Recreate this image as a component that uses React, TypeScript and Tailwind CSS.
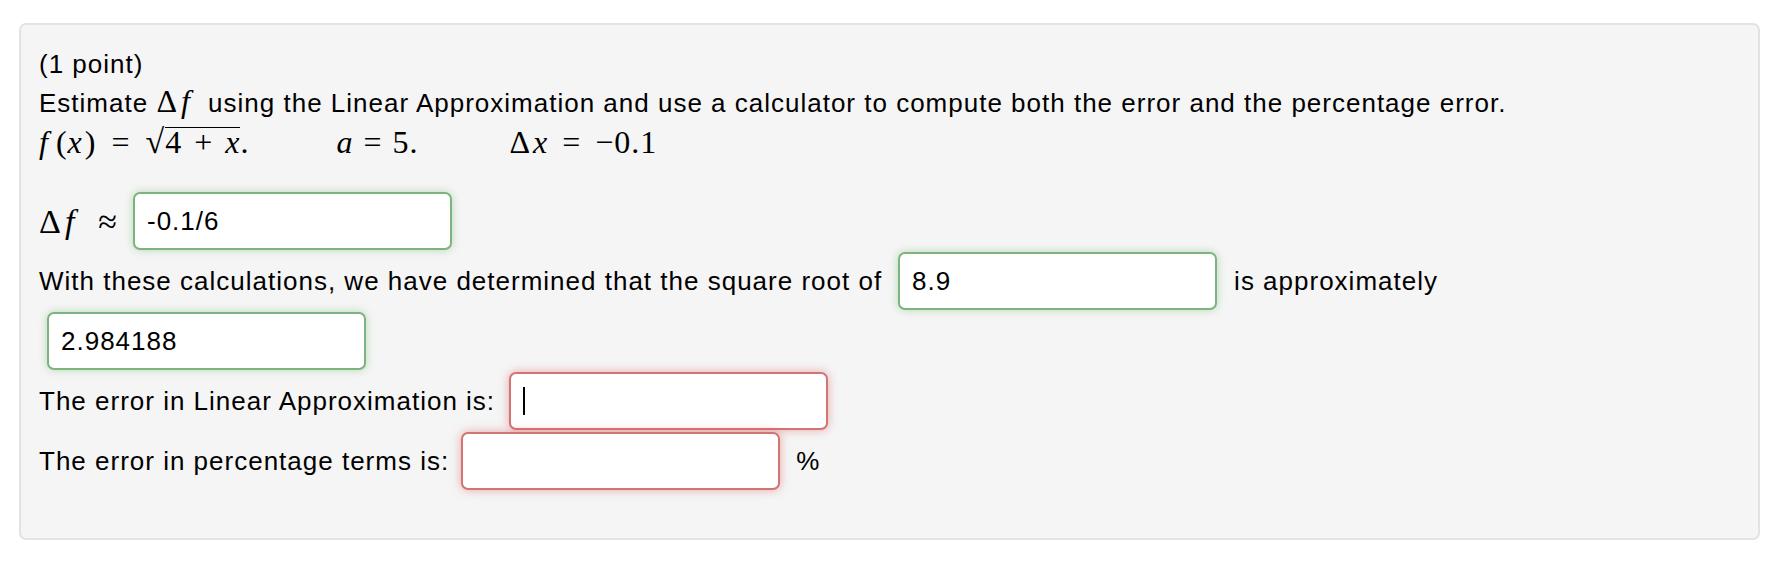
import React from "react";

const sans = { fontFamily: '"Liberation Sans", Arial, Helvetica, sans-serif' };

function Serif({ children, italic = false, className = "" }: { children: React.ReactNode; italic?: boolean; className?: string }) {
  return (
    <span className={`font-['Liberation_Serif',serif] ${italic ? "italic" : ""} ${className}`}>{children}</span>
  );
}

function Field({ value, state, className = "", cursor = false }: { value: string; state: "ok" | "bad"; className?: string; cursor?: boolean }) {
  const cls =
    state === "ok"
      ? "border-[#7db47d] shadow-[0_0_9px_rgba(110,180,110,0.45)]"
      : "border-[#d27474] shadow-[0_0_10px_rgba(220,90,90,0.5)]";
  return (
    <div
      className={`relative flex h-[58px] w-[319px] shrink-0 items-center rounded-[7px] border-2 bg-white pl-[12px] text-[26px] tracking-[1px] text-black ${cls} ${className}`}
    >
      {value}
      {cursor && <span className="block h-[28px] w-[2px] bg-black" />}
    </div>
  );
}

export default function App() {
  return (
    <div className="min-h-screen bg-white pl-[19px] pt-[23px] text-black" style={sans}>
      <div className="h-[517px] w-[1741px] rounded-[7px] border-2 border-[#e3e3e3] bg-[#f5f5f5] pl-[18px] pt-[21px] font-['Liberation_Sans',Arial,sans-serif] text-[26px] tracking-[1px]">
        <div className="h-[37px] leading-[37px]">(1 point)</div>
        <div className="h-[37px] leading-[37px]">
          Estimate{" "}
          <Serif className="text-[32px] tracking-normal">
            Δ<Serif italic className="ml-[4px] mr-[10px]">f</Serif>
          </Serif>{" "}
          using the Linear Approximation and use a calculator to compute both the error and the percentage error.
        </div>
        <div className="flex h-[44px] items-baseline text-[32px] leading-[44px]">
          <Serif>
            <Serif italic className="mr-[7px]">f</Serif>(<Serif italic className="mr-[2px]">x</Serif>)<span className="mx-[15px]">=</span>
            <span className="inline-block text-[34px]">√</span>
            <span className="inline-block border-t-[1.5px] border-black leading-[28px]">
              4<span className="mx-[12px]">+</span>
              <Serif italic>x</Serif>
            </span>
            .
          </Serif>
          <Serif className="ml-[87px]">
            <Serif italic>a</Serif>
            <span className="mx-[10px]">=</span>5.
          </Serif>
          <Serif className="ml-[91px]">
            Δ<Serif italic className="ml-[2px]">x</Serif>
            <span className="mx-[14px]">=</span>−0.1
          </Serif>
        </div>

        <div className="mt-[27px] flex h-[60px] items-center">
          <Serif className="text-[34px] tracking-normal">
            Δ<Serif italic className="ml-[4px]">f</Serif>
            <span className="ml-[24px]">≈</span>
          </Serif>
          <Field value="-0.1/6" state="ok" className="ml-[16px]" />
        </div>
        <div className="flex h-[60px] items-center">
          <span>With these calculations, we have determined that the square root of</span>
          <Field value="8.9" state="ok" className="ml-[16px]" />
          <span className="ml-[17px]">is approximately</span>
        </div>
        <div className="flex h-[60px] items-center">
          <Field value="2.984188" state="ok" className="ml-[8px]" />
        </div>
        <div className="flex h-[60px] items-center">
          <span>The error in Linear Approximation is:</span>
          <Field value="" state="bad" className="ml-[14px]" cursor />
        </div>
        <div className="flex h-[60px] items-center">
          <span>The error in percentage terms is:</span>
          <Field value="" state="bad" className="ml-[12px]" />
          <span className="ml-[16px]">%</span>
        </div>
      </div>
    </div>
  );
}
